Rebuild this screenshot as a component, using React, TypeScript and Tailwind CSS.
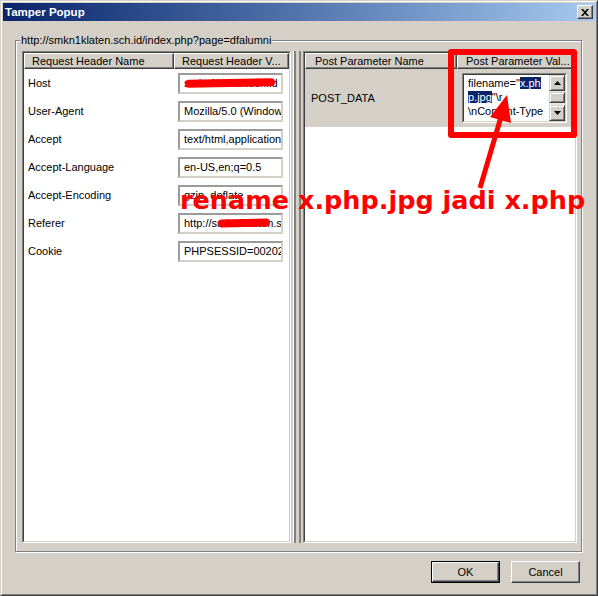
import React from "react";

const rows: { name: string; value: string; redact?: { left: number; width: number } }[] = [
  { name: "Host", value: "smkn1klaten.sch.id", redact: { left: 5, width: 90 } },
  { name: "User-Agent", value: "Mozilla/5.0 (Windows NT 6.1; rv:17.0)" },
  { name: "Accept", value: "text/html,application/xhtml+xml" },
  { name: "Accept-Language", value: "en-US,en;q=0.5" },
  { name: "Accept-Encoding", value: "gzip, deflate" },
  { name: "Referer", value: "http://smkn1klaten.sch.id/index.php", redact: { left: 38, width: 52 } },
  { name: "Cookie", value: "PHPSESSID=00202c1a9f" },
];

function HeaderCell({ w, label, pl }: { w: string; label: string; pl: string }) {
  return (
    <div
      className={`${w} h-[16px] bg-[#d4d0c8] border border-t-white border-l-white border-b-[#404040] border-r-[#404040] shadow-[inset_-1px_-1px_0_#808080] ${pl} leading-[14px] whitespace-nowrap overflow-hidden`}
    >
      {label}
    </div>
  );
}

function Sunken({ className, children }: { className: string; children: React.ReactNode }) {
  return (
    <div className={`${className} border border-t-[#808080] border-l-[#808080] border-b-white border-r-white`}>
      <div className="h-full border border-t-[#404040] border-l-[#404040] border-b-[#d4d0c8] border-r-[#d4d0c8] bg-white flex flex-col overflow-hidden">
        {children}
      </div>
    </div>
  );
}

function ScrollBtn({ up }: { up: boolean }) {
  return (
    <div className="h-[16px] bg-[#d4d0c8] border border-t-[#d4d0c8] border-l-[#d4d0c8] border-b-[#404040] border-r-[#404040] shadow-[inset_1px_1px_0_#fff,inset_-1px_-1px_0_#808080] flex items-center justify-center">
      <svg width="7" height="4" viewBox="0 0 7 4">
        {up ? <polygon points="3.5,0 7,4 0,4" fill="#000" /> : <polygon points="0,0 7,0 3.5,4" fill="#000" />}
      </svg>
    </div>
  );
}

export default function App() {
  return (
    <div className="relative w-[598px] h-[596px] font-['Liberation_Sans',Arial,sans-serif] text-[11px] text-black">
      <div className="w-[598px] h-[596px] border border-t-[#d4d0c8] border-l-[#d4d0c8] border-r-[#404040] border-b-[#404040] bg-[#d4d0c8]">
        <div className="h-full border border-t-white border-l-white border-r-[#808080] border-b-[#808080] p-px flex flex-col">
          {/* Title bar */}
          <div className="h-[18px] flex items-center justify-between bg-linear-to-r from-[#0a246a] to-[#a6caf0] pl-[2px] pr-[2px]">
            <span className="text-white font-bold text-[11.5px] leading-[14px]">Tamper Popup</span>
            <div className="w-[16px] h-[14px] bg-[#d4d0c8] border border-t-white border-l-white border-b-[#404040] border-r-[#404040] shadow-[inset_-1px_-1px_0_#808080] flex items-center justify-center">
              <svg width="8" height="7" viewBox="0 0 8 7">
                <path d="M0 0 L2 0 L4 2.3 L6 0 L8 0 L5 3.5 L8 7 L6 7 L4 4.7 L2 7 L0 7 L3 3.5 Z" fill="#000" />
              </svg>
            </div>
          </div>

          {/* Group box */}
          <div className="relative ml-[12px] mt-[19px] w-[567px] h-[512px] border border-[#808080] shadow-[inset_1px_1px_0_#fff,1px_1px_0_#fff]">
            <span className="absolute left-[4px] -top-[8px] px-px bg-[#d4d0c8] leading-[14px] whitespace-nowrap">
              http://smkn1klaten.sch.id/index.php?page=dfalumni
            </span>
            <div className="flex h-full pt-[10px] pb-[8px] pl-[6px] pr-[4px]">
              {/* Left panel */}
              <Sunken className="w-[269px] h-full">
                <div className="flex">
                  <HeaderCell w="w-[150px]" label="Request Header Name" pl="pl-[7px]" />
                  <HeaderCell w="w-[115px]" label="Request Header V..." pl="pl-[7px]" />
                </div>
                {rows.map((r) => (
                  <div key={r.name} className="h-[28px] flex items-center">
                    <div className="w-[150px] pl-[4px] pt-px whitespace-nowrap">{r.name}</div>
                    <div className="pl-[4px]">
                      <div className="relative w-[105px] h-[21px] border-2 border-t-[#9b9b9b] border-l-[#9b9b9b] border-b-[#d4d0c8] border-r-[#d4d0c8] bg-white overflow-hidden whitespace-nowrap pl-[4px] leading-[17px]">
                        {r.value}
                        {r.redact && (
                          <div
                            className="absolute top-[4px] h-[8px] rounded-full bg-[#ff0000] -rotate-1"
                            style={{ left: r.redact.left, width: r.redact.width }}
                          />
                        )}
                      </div>
                    </div>
                  </div>
                ))}
              </Sunken>

              {/* Splitter */}
              <div className="w-[12px] h-full flex">
                <div className="w-[2px]" />
                <div className="w-px bg-white" />
                <div className="w-[2px] bg-[#808080]" />
                <div className="w-[3px]" />
                <div className="w-[2px] bg-[#808080]" />
                <div className="w-[2px]" />
              </div>

              {/* Right panel */}
              <Sunken className="w-[274px] h-full">
                <div className="flex">
                  <HeaderCell w="w-[152px]" label="Post Parameter Name" pl="pl-[9px]" />
                  <HeaderCell w="w-[118px]" label="Post Parameter Val..." pl="pl-[8px]" />
                </div>
                <div className="h-[58px] bg-[#d4d0c8] flex">
                  <div className="w-[152px] pl-[6px] flex items-center">POST_DATA</div>
                  <div className="pl-[5px] pt-[4px]">
                    <div className="w-[105px] h-[50px] border border-t-[#808080] border-l-[#808080] border-b-white border-r-white">
                      <div className="h-full border border-t-[#404040] border-l-[#404040] border-b-[#d4d0c8] border-r-[#d4d0c8] bg-white flex">
                        <div className="flex-1 pl-[4px] pt-[1px] leading-[14px] whitespace-nowrap overflow-hidden">
                          <div>
                            filename=&quot;<span className="bg-[#0a246a] text-white">x.ph</span>
                          </div>
                          <div>
                            <span className="bg-[#0a246a] text-white">p.jpg</span>&quot;\r
                          </div>
                          <div>\nContent-Type</div>
                        </div>
                        <div className="w-[16px] flex flex-col">
                          <ScrollBtn up />
                          <div className="h-[14px] bg-[#ebe9e5] pt-px">
                            <div className="h-[11px] bg-[#d4d0c8] border border-t-[#d4d0c8] border-l-[#d4d0c8] border-b-[#404040] border-r-[#404040] shadow-[inset_1px_1px_0_#fff,inset_-1px_-1px_0_#808080]" />
                          </div>
                          <ScrollBtn up={false} />
                        </div>
                      </div>
                    </div>
                  </div>
                </div>
              </Sunken>
            </div>
          </div>

          {/* Buttons */}
          <div className="mt-[9px] flex justify-end gap-[11px] pr-[15px]">
            <div className="w-[69px] h-[22px] border border-black">
              <div className="h-full bg-[#d4d0c8] border border-t-white border-l-white border-b-[#404040] border-r-[#404040] shadow-[inset_-1px_-1px_0_#808080] flex items-center justify-center">
                OK
              </div>
            </div>
            <div className="w-[69px] h-[22px] bg-[#d4d0c8] border border-t-white border-l-white border-b-[#404040] border-r-[#404040] shadow-[inset_-1px_-1px_0_#808080] flex items-center justify-center">
              Cancel
            </div>
          </div>
        </div>
      </div>

      {/* Annotations */}
      <div className="absolute left-[448px] top-[49px] w-[129px] h-[89px] border-[6px] border-[#ff0000] rounded-[3px] pointer-events-none" />
      <svg className="absolute left-0 top-0 pointer-events-none" width="598" height="596" viewBox="0 0 598 596">
        <line x1="480" y1="188" x2="501" y2="117" stroke="#ff0000" strokeWidth="5" />
        <polygon points="507,95 490,117 511,123" fill="#ff0000" />
      </svg>
      <div className="absolute left-[180px] top-[187px] font-['DejaVu_Sans',sans-serif] font-bold text-[25.5px] leading-[26px] text-[#ff0000] whitespace-nowrap">
        rename x.php.jpg jadi x.php
      </div>
    </div>
  );
}
